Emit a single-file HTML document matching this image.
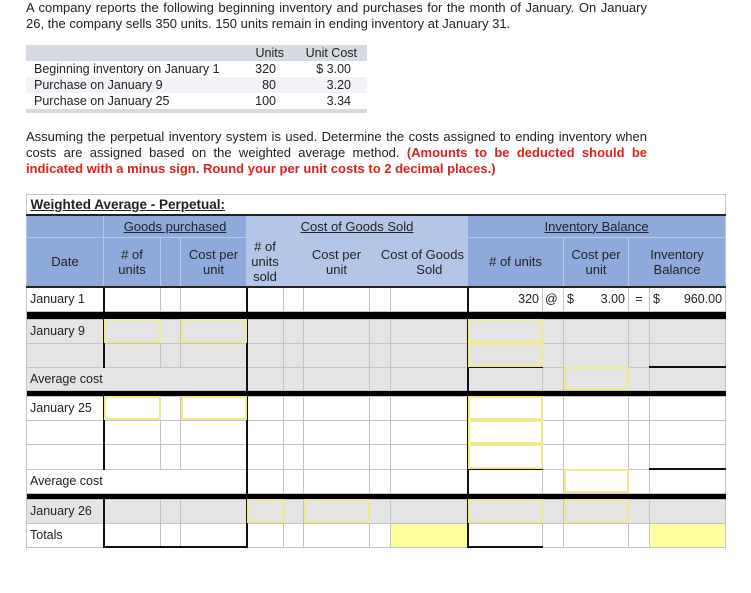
<!DOCTYPE html>
<html><head><meta charset="utf-8"><style>
body{margin:0;background:#fff;font-family:"Liberation Sans",Arial,sans-serif;color:#222;width:751px;height:593px;overflow:hidden;position:relative}
.p{position:absolute;left:26px;width:621px;font-size:13px;line-height:16px;text-align:justify}
.red{color:#e0201b;font-weight:bold}
#t1{position:absolute;left:26px;top:45px;width:341px;font-size:12.5px;border-collapse:collapse}
#t1 td{padding:0;height:16px;line-height:16px}
#main{position:absolute;left:26px;top:194px;width:700px;height:355px;border:1px solid #c8c8c8;border-bottom:none;box-sizing:border-box}
table.m{position:absolute;left:26px;top:195px;border-collapse:collapse;table-layout:fixed;width:699px;font-size:12.5px}
.m td{padding:0 3px;border:1px solid #c4c4c4;overflow:hidden;white-space:nowrap;box-sizing:border-box}
.m .h1 td{background:#8eaadb;text-align:center;font-size:13px;border-color:#b8c6e0;border-top:2px solid #222}
.m .h1 td.l{background:#b4c6e7}
.m .h2 td{background:#8eaadb;text-align:center;line-height:15px;font-size:13px;border-color:#b8c6e0;border-bottom:2px solid #222}
.m .h2 td.l{background:#b4c6e7}
.g td{background:#e4e4e4}
.bar td{background:#000;border:none;padding:0;font-size:0;line-height:0}
.y{outline:2px solid #f2ea8a;outline-offset:-2px}
.yf{background:#ffff9e!important}
.dl{border-left:2px solid #111!important}
.bb{border-bottom:2px solid #111!important}
.bt{border-top:2px solid #111!important}
.r{text-align:right}
</style></head><body>
<div class="p" style="top:0">A company reports the following beginning inventory and purchases for the month of January. On January 26, the company sells 350 units. 150 units remain in ending inventory at January 31.</div>
<table id="t1">
<tr style="background:#d6dae3"><td style="width:208px"></td><td style="width:50px;text-align:right;padding-right:0">Units</td><td style="text-align:right;padding-right:10px">Unit Cost</td></tr>
<tr><td style="padding-left:8px">Beginning inventory on January 1</td><td style="text-align:right;padding-right:8px">320</td><td style="text-align:right;padding-right:16px">$ 3.00</td></tr>
<tr style="background:#f2f3f6"><td style="padding-left:8px">Purchase on January 9</td><td style="text-align:right;padding-right:8px">80</td><td style="text-align:right;padding-right:16px">3.20</td></tr>
<tr><td style="padding-left:8px">Purchase on January 25</td><td style="text-align:right;padding-right:8px">100</td><td style="text-align:right;padding-right:16px">3.34</td></tr>
<tr style="background:#d6dae3"><td colspan="3" style="height:4px;line-height:4px"></td></tr>
</table>
<div class="p" style="top:129px">Assuming the perpetual inventory system is used. Determine the costs assigned to ending inventory when costs are assigned based on the weighted average method. <span class="red">(Amounts to be deducted should be indicated with a minus sign. Round your per unit costs to 2 decimal places.)</span></div>
<div id="main"></div>
<table class="m">
<colgroup><col style="width:77px"><col style="width:57px"><col style="width:20px"><col style="width:66px"><col style="width:37px"><col style="width:20px"><col style="width:66px"><col style="width:21px"><col style="width:77px"><col style="width:75px"><col style="width:21px"><col style="width:65px"><col style="width:21px"><col style="width:76px"></colgroup>
<tr style="height:20px"><td colspan="14" style="border:none;font-weight:bold;font-size:13.5px;padding-left:4px"><u>Weighted Average - Perpetual:</u></td></tr>
<tr class="h1" style="height:22px"><td></td><td colspan="3"><u>Goods purchased</u></td><td colspan="5" class="l"><u>Cost of Goods Sold</u></td><td colspan="5"><u>Inventory Balance</u></td></tr>
<tr class="h2" style="height:50px"><td>Date</td><td># of<br>units</td><td></td><td class="r">Cost per<br>unit</td><td class="l"># of<br>units<br>sold</td><td class="l"></td><td class="l">Cost per<br>unit</td><td class="l" colspan="2" style="text-align:right">Cost of Goods<br>Sold&nbsp;&nbsp;&nbsp;&nbsp;&nbsp;&nbsp;</td><td colspan="2"># of units</td><td>Cost per<br>unit</td><td colspan="2">Inventory<br>Balance</td></tr>
<tr style="height:24px"><td>January 1</td><td class="dl"></td><td></td><td></td><td class="dl"></td><td></td><td></td><td></td><td></td><td class="dl r">320</td><td style="padding:0 2px">@</td><td>$<span style="float:right">3.00</span></td><td style="text-align:center">=</td><td>$<span style="float:right">960.00</span></td></tr>
<tr class="bar" style="height:8px"><td colspan="14"></td></tr>
<tr class="g" style="height:24px"><td>January 9</td><td class="dl y"></td><td></td><td class="y"></td><td class="dl"></td><td></td><td></td><td></td><td></td><td class="dl y"></td><td></td><td></td><td></td><td></td></tr>
<tr class="g" style="height:24px"><td></td><td class="dl"></td><td></td><td></td><td class="dl"></td><td></td><td></td><td></td><td></td><td class="dl y"></td><td></td><td></td><td></td><td></td></tr>
<tr class="g" style="height:23px"><td colspan="4">Average cost</td><td class="dl"></td><td></td><td></td><td></td><td></td><td class="dl bt"></td><td></td><td class="y"></td><td></td><td class="bt"></td></tr>
<tr class="bar" style="height:6px"><td colspan="14"></td></tr>
<tr style="height:24px"><td>January 25</td><td class="dl y"></td><td></td><td class="y"></td><td class="dl"></td><td></td><td></td><td></td><td></td><td class="dl y"></td><td></td><td></td><td></td><td></td></tr>
<tr style="height:24px"><td></td><td class="dl"></td><td></td><td></td><td class="dl"></td><td></td><td></td><td></td><td></td><td class="dl y"></td><td></td><td></td><td></td><td></td></tr>
<tr style="height:25px"><td></td><td class="dl"></td><td></td><td></td><td class="dl"></td><td></td><td></td><td></td><td></td><td class="dl y"></td><td></td><td></td><td></td><td></td></tr>
<tr style="height:24px"><td colspan="4">Average cost</td><td class="dl"></td><td></td><td></td><td></td><td></td><td class="dl bt"></td><td></td><td class="y"></td><td></td><td class="bt"></td></tr>
<tr class="bar" style="height:6px"><td colspan="14"></td></tr>
<tr class="g" style="height:24px"><td>January 26</td><td class="dl"></td><td></td><td></td><td class="dl y"></td><td></td><td class="y"></td><td></td><td></td><td class="dl y"></td><td></td><td class="y"></td><td></td><td></td></tr>
<tr style="height:24px"><td>Totals</td><td class="dl bb"></td><td class="bb"></td><td class="bb"></td><td class="dl"></td><td></td><td></td><td></td><td class="yf"></td><td class="dl bb"></td><td></td><td></td><td></td><td class="yf"></td></tr>
</table>
</body></html>
